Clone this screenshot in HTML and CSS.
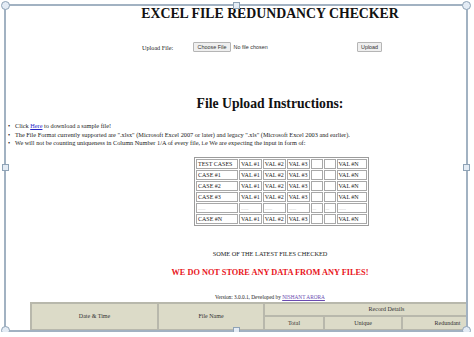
FILE: index.html
```html
<!DOCTYPE html>
<html lang="en">
<head>
  <meta charset="UTF-8" />
  <title>Excel File Redundancy Checker</title>
  <link rel="stylesheet" href="styles.css">
</head>
<body>
  <div class="frame">
    <div class="viewport">
      <div class="sheet">
        <h1 class="title">EXCEL FILE REDUNDANCY CHECKER</h1>

        <form class="upload">
          <span class="upload-label">Upload File:</span>
          <span class="file-input"><button type="button" class="btn">Choose File</button> No file chosen</span>
          <button type="button" class="btn">Upload</button>
        </form>

        <h2 class="heading">File Upload Instructions:</h2>

        <ul class="notes">
          <li>Click <a href="#">Here</a> to download a sample file!</li>
          <li>The File Format currently supported are ".xlsx" (Microsoft Excel 2007 or later) and legacy ".xls" (Microsoft Excel 2003 and earlier).</li>
          <li>We will not be counting uniqueness in Column Number 1/A of every file, i.e We are expecting the input in form of:</li>
        </ul>

        <table class="sample">
          <tr><td class="c-case">TEST CASES</td><td>VAL #1</td><td>VAL #2</td><td>VAL #3</td><td class="c-gap"></td><td class="c-gap"></td><td class="c-last">VAL #N</td></tr>
          <tr><td>CASE #1</td><td>VAL #1</td><td>VAL #2</td><td>VAL #3</td><td></td><td></td><td>VAL #N</td></tr>
          <tr><td>CASE #2</td><td>VAL #1</td><td>VAL #2</td><td>VAL #3</td><td></td><td></td><td>VAL #N</td></tr>
          <tr><td>CASE #3</td><td>VAL #1</td><td>VAL #2</td><td>VAL #3</td><td></td><td></td><td>VAL #N</td></tr>
          <tr class="dots"><td>......</td><td>......</td><td>......</td><td>......</td><td>...</td><td>...</td><td>......</td></tr>
          <tr><td>CASE #N</td><td>VAL #1</td><td>VAL #2</td><td>VAL #3</td><td></td><td></td><td>VAL #N</td></tr>
        </table>

        <p class="latest">SOME OF THE LATEST FILES CHECKED</p>
        <p class="warning">WE DO NOT STORE ANY DATA FROM ANY FILES!</p>
        <p class="version">Version: 3.0.0.1, Developed by <a href="#">NISHANT ARORA</a></p>

        <table class="records">
          <tr>
            <th rowspan="2" class="r-date">Date &amp; Time</th>
            <th rowspan="2" class="r-name">File Name</th>
            <th colspan="3" class="r-details">Record Details</th>
          </tr>
          <tr>
            <th class="r-total">Total</th>
            <th class="r-unique">Unique</th>
            <th class="r-redundant">Redundant</th>
          </tr>
        </table>
      </div>
    </div>

    <span class="handle corner tl"></span>
    <span class="handle corner tr"></span>
    <span class="handle corner bl"></span>
    <span class="handle corner br"></span>
    <span class="handle side tm"></span>
    <span class="handle side bm"></span>
    <span class="handle side ml"></span>
    <span class="handle side mr"></span>
  </div>
</body>
</html>
```

FILE: styles.css
```css
html, body {
  margin: 0;
  padding: 0;
  background: white;
  font-family: 'Liberation Serif', 'Times New Roman', serif;
  color: #222;
}

.frame {
  position: relative;
  box-sizing: border-box;
  width: 464px;
  height: 328px;
  margin: 4px 0 0 4px;
  border: 2px solid #a2b2c2;
}

.viewport {
  height: 100%;
  overflow: hidden;
}

.sheet {
  width: 528px;
  text-align: center;
}

.title {
  margin: 0;
  font-size: 13.8px;
  line-height: 16px;
  color: #111;
}

.upload {
  display: flex;
  align-items: center;
  margin: 20px 0 0 136px;
  height: 10px;
  font-size: 6.2px;
  text-align: left;
}

.upload-label {
  width: 51px;
}

.file-input {
  width: 164px;
  font-family: 'Liberation Sans', Arial, sans-serif;
  font-size: 5.4px;
  color: #333;
}

.btn {
  height: 10px;
  padding: 0 3px;
  margin: 0;
  font-family: 'Liberation Sans', Arial, sans-serif;
  font-size: 5.4px;
  color: #333;
  background: #efefef;
  border: 1px solid #b5b5b5;
  border-radius: 1px;
}

.file-input .btn {
  width: 38px;
  margin-right: 1px;
}

.upload > .btn {
  width: 25px;
}

.heading {
  margin: 44px 0 0;
  font-size: 13.7px;
  line-height: 16px;
  color: #111;
}

.notes {
  margin: 10px 0 0;
  padding: 0 0 0 2px;
  list-style: none;
  font-size: 6.3px;
  line-height: 8.5px;
  text-align: left;
}

.notes li {
  padding-left: 7px;
  text-indent: -7px;
}

.notes li::before {
  content: "\2022";
  display: inline-block;
  width: 7px;
  text-indent: 0;
  font-size: 6px;
  color: #111;
}

.notes a {
  color: #2626c8;
}

.sample {
  margin: 9px 0 0 188px;
  border: 1px solid #9c9c9c;
  border-spacing: 1px;
  font-size: 6px;
  text-align: left;
}

.sample td {
  height: 8px;
  padding: 0 1px;
  border: 1px solid #a8a8a8;
  line-height: 8px;
  white-space: nowrap;
}

.sample .dots td {
  color: #a0a0a0;
  font-size: 5px;
  line-height: 7px;
  vertical-align: bottom;
}

.c-case {
  width: 38px;
}

.c-gap {
  width: 8px;
}

.c-last {
  width: 26px;
}

.latest {
  margin: 24px 0 0;
  font-size: 6.3px;
  line-height: 8px;
}

.warning {
  margin: 10px 0 0;
  font-size: 8.3px;
  line-height: 10px;
  font-weight: bold;
  color: #e8141b;
}

.version {
  margin: 16px 0 0;
  font-size: 5.3px;
  line-height: 7px;
}

.version a {
  color: #6a4bb0;
}

.records {
  width: 480px;
  margin: 1px 0 0 24px;
  border-collapse: collapse;
  border: 2px solid #b2b2a6;
  font-size: 6px;
  color: #333;
}

.records th {
  font-weight: normal;
  background: #dcdbc8;
  border: 2px solid #b8b8ac;
  padding: 0;
}

.records .r-details {
  height: 11px;
}

.records .r-total,
.records .r-unique,
.records .r-redundant {
  height: 12px;
}

.records .r-date {
  width: 125px;
}

.records .r-name {
  width: 104px;
}

.records .r-total {
  width: 58px;
}

.records .r-unique {
  width: 76px;
}

.records .r-redundant {
  padding-right: 16px;
}

.handle {
  position: absolute;
  box-sizing: border-box;
  background: #e4ecf5;
  border: 1px solid #8fa3b6;
}

.corner {
  width: 9px;
  height: 9px;
  border-radius: 50%;
}

.side {
  width: 7px;
  height: 7px;
}

.tl { top: -5px; left: -5px; }
.tr { top: -5px; right: -5px; }
.bl { bottom: -5px; left: -5px; }
.br { bottom: -5px; right: -5px; }
.tm { top: -4px; left: 227px; }
.bm { bottom: -4px; left: 227px; }
.ml { left: -4px; top: 158px; }
.mr { right: -4px; top: 158px; }
```
